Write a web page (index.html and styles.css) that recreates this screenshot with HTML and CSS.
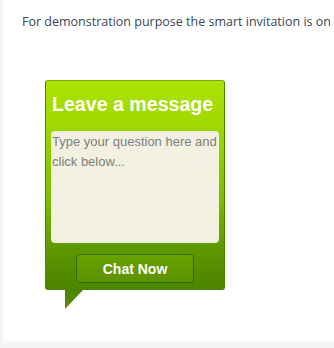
FILE: index.html
```html
<!DOCTYPE html>
<html>
<head>
<meta charset="utf-8">
<link rel="stylesheet" href="styles.css">
</head>
<body>
<div class="page">
  <p class="intro">For demonstration purpose the smart invitation is on</p>
  <div class="widget">
    <div class="title">Leave a message</div>
    <div class="field">Type your question here and<br>click below...</div>
    <div class="actions"><button class="chat">Chat Now</button></div>
  </div>
</div>
</body>
</html>
```
FILE: styles.css
```css
html, body {
  margin: 0;
  padding: 0;
}
body {
  background: #f5f5f5;
  width: 334px;
  height: 348px;
  overflow: hidden;
}
.page {
  background: #ffffff;
  margin-left: 3px;
  height: 341px;
  overflow: hidden;
  display: flex;
  flex-direction: column;
}
.intro {
  margin: 0;
  padding: 13px 0 0 19px;
  font-family: "Open Sans", sans-serif;
  font-size: 12.5px;
  line-height: 18px;
  color: #3a4758;
  white-space: nowrap;
}
.widget {
  position: relative;
  margin: 49px 0 0 42px;
  width: 178px;
  height: 208px;
  border: 1px solid #4f8200;
  border-top-color: #7fa800;
  border-radius: 3px;
  background: linear-gradient(to bottom, #abe300 0%, #9bd600 25%, #80bd00 55%, #5f9900 80%, #4c8300 100%);
  display: flex;
  flex-direction: column;
  font-family: "Liberation Sans", Arial, sans-serif;
}
.widget::after {
  content: "";
  position: absolute;
  left: 19px;
  top: 209px;
  width: 18px;
  height: 19px;
  background: linear-gradient(to bottom, #4c8300, #5a9010);
  clip-path: polygon(0 0, 100% 0, 0 100%);
}
.title {
  padding: 12px 0 0 6px;
  font-size: 19.6px;
  line-height: 22px;
  font-weight: bold;
  color: #ffffff;
  white-space: nowrap;
}
.field {
  margin: 16px 5px 0 5px;
  height: 112px;
  box-sizing: border-box;
  padding: 1px 0 0 1px;
  background: #f2f0e0;
  border-radius: 4px;
  color: #7e7e7e;
  font-size: 13px;
  line-height: 20px;
  white-space: nowrap;
}
.actions {
  display: flex;
  justify-content: center;
  margin-top: 11px;
}
.chat {
  width: 118px;
  height: 29px;
  border: 1px solid #2f6a08;
  border-radius: 4px;
  background: linear-gradient(to bottom, #6aa200, #5b9200);
  color: #ffffff;
  font-family: "Liberation Sans", Arial, sans-serif;
  font-weight: bold;
  font-size: 14px;
  padding: 0;
}
```
